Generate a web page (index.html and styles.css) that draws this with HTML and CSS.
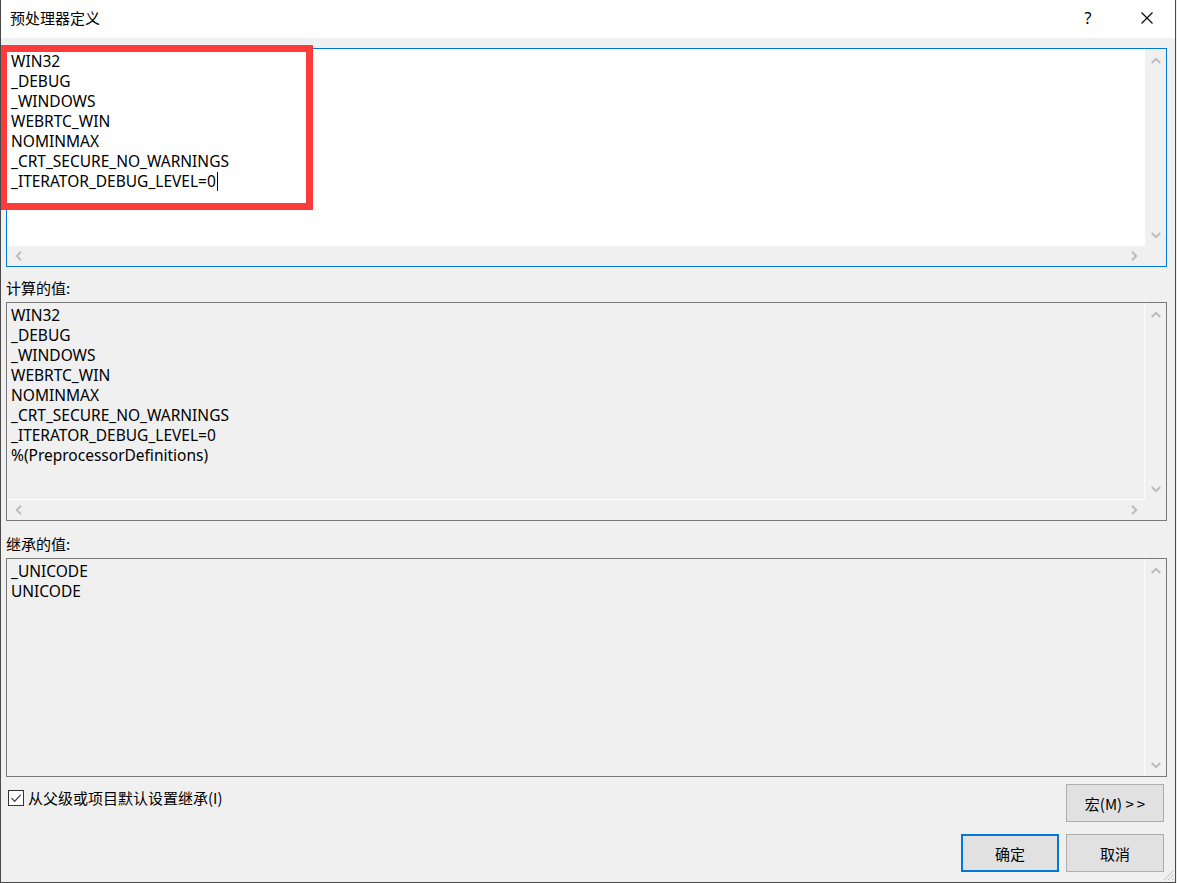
FILE: index.html
```html
<!DOCTYPE html>
<html lang="zh-CN">
<head>
<meta charset="utf-8">
<title>预处理器定义</title>
<link rel="stylesheet" href="styles.css">
</head>
<body>
<div class="window">
  <div class="titlebar">
    <span class="title">预处理器定义</span>
    <span class="help">?</span>
    <span class="close">
      <svg width="12" height="12" viewBox="0 0 12 12"><path d="M0.5 0.5 L11.5 11.5 M11.5 0.5 L0.5 11.5" stroke="#000" stroke-width="1.1" fill="none"/></svg>
    </span>
  </div>
  <div class="client">
    <div class="editbox focused has-h">
      <div class="content">
        <div class="line">WIN32</div>
        <div class="line">_DEBUG</div>
        <div class="line">_WINDOWS</div>
        <div class="line">WEBRTC_WIN</div>
        <div class="line">NOMINMAX</div>
        <div class="line">_CRT_SECURE_NO_WARNINGS</div>
        <div class="line">_ITERATOR_DEBUG_LEVEL=0<span class="caret"></span></div>
      </div>
      <div class="vscroll">
        <span class="sbtn"><svg width="10" height="7" viewBox="0 0 10 7"><polyline points="0.8,6 5,1.8 9.2,6" class="chev"/></svg></span>
        <span class="sbtn"><svg width="10" height="7" viewBox="0 0 10 7"><polyline points="0.8,1 5,5.2 9.2,1" class="chev"/></svg></span>
      </div>
      <div class="hscroll">
        <span class="hbtn"><svg width="7" height="10" viewBox="0 0 7 10"><polyline points="6,0.8 1.8,5 6,9.2" class="chev"/></svg></span>
        <span class="hbtn"><svg width="7" height="10" viewBox="0 0 7 10"><polyline points="1,0.8 5.2,5 1,9.2" class="chev"/></svg></span>
      </div>
      <div class="corner"></div>
    </div>

    <div class="label label-a">计算的值:</div>
    <div class="editbox disabled has-h">
      <div class="content">
        <div class="line">WIN32</div>
        <div class="line">_DEBUG</div>
        <div class="line">_WINDOWS</div>
        <div class="line">WEBRTC_WIN</div>
        <div class="line">NOMINMAX</div>
        <div class="line">_CRT_SECURE_NO_WARNINGS</div>
        <div class="line">_ITERATOR_DEBUG_LEVEL=0</div>
        <div class="line">%(PreprocessorDefinitions)</div>
      </div>
      <div class="vscroll">
        <span class="sbtn"><svg width="10" height="7" viewBox="0 0 10 7"><polyline points="0.8,6 5,1.8 9.2,6" class="chev"/></svg></span>
        <span class="sbtn"><svg width="10" height="7" viewBox="0 0 10 7"><polyline points="0.8,1 5,5.2 9.2,1" class="chev"/></svg></span>
      </div>
      <div class="hscroll">
        <span class="hbtn"><svg width="7" height="10" viewBox="0 0 7 10"><polyline points="6,0.8 1.8,5 6,9.2" class="chev"/></svg></span>
        <span class="hbtn"><svg width="7" height="10" viewBox="0 0 7 10"><polyline points="1,0.8 5.2,5 1,9.2" class="chev"/></svg></span>
      </div>
      <div class="corner"></div>
    </div>

    <div class="label label-b">继承的值:</div>
    <div class="editbox disabled">
      <div class="content">
        <div class="line">_UNICODE</div>
        <div class="line">UNICODE</div>
      </div>
      <div class="vscroll">
        <span class="sbtn"><svg width="10" height="7" viewBox="0 0 10 7"><polyline points="0.8,6 5,1.8 9.2,6" class="chev"/></svg></span>
        <span class="sbtn"><svg width="10" height="7" viewBox="0 0 10 7"><polyline points="0.8,1 5,5.2 9.2,1" class="chev"/></svg></span>
      </div>
    </div>

    <div class="row-a">
      <label class="check">
        <span class="checkbox"><svg width="14" height="14" viewBox="0 0 14 14"><polyline points="2.5,7.2 5.6,10.3 11.6,3.8" fill="none" stroke="#3a3a3a" stroke-width="1.2"/></svg></span>
        <span class="check-text">从父级或项目默认设置继承(I)</span>
      </label>
      <button class="btn">宏(M) <span class="gt">&gt;&gt;</span></button>
    </div>
    <div class="row-b">
      <button class="btn default">确定</button>
      <button class="btn">取消</button>
    </div>
  </div>
  <svg class="grip" width="12" height="12" viewBox="0 0 12 12">
    <path d="M11 2 L2 11 M11 6 L6 11 M11 10 L10 11" stroke="#b5b5b5" stroke-width="1.2" stroke-dasharray="1 1" fill="none"/>
  </svg>
  <div class="annotation"></div>
</div>
</body>
</html>
```

FILE: styles.css
```css
* { box-sizing: border-box; }

html, body {
  margin: 0;
  padding: 0;
  background: #f0f0f0;
}

body {
  font-family: "Noto Sans CJK SC", sans-serif;
  font-size: 15px;
  color: #000;
}

.window {
  position: relative;
  width: 1176px;
  height: 883px;
  background: #f0f0f0;
  border-left: 1px solid #4a4a4a;
  border-right: 1px solid #4a4a4a;
  border-bottom: 1px solid #4a4a4a;
  overflow: hidden;
}

.titlebar {
  height: 38px;
  background: #fff;
  display: flex;
  align-items: center;
  padding-left: 9px;
}

.title {
  font-size: 15px;
  line-height: 20px;
  flex: 1;
  position: relative;
  top: -1px;
}

.help {
  font-family: "Noto Sans", sans-serif;
  font-size: 16px;
  width: 20px;
  text-align: center;
  margin-right: 43px;
  position: relative;
  top: -1px;
}

.close {
  width: 12px;
  height: 12px;
  display: flex;
  margin-right: 22px;
  position: relative;
  top: -1px;
}

.client {
  padding: 10px 8px 0 5px;
}

.editbox {
  height: 219px;
  border: 1px solid #7a7a7a;
  display: grid;
  grid-template-columns: 1fr 21px;
  grid-template-rows: 1fr;
}

.editbox.has-h {
  grid-template-rows: 1fr 20px;
}

.editbox.focused {
  border-color: #0078d7;
}

.content {
  background: #fff;
  padding: 2px 0 0 4px;
  font-family: "Noto Sans", sans-serif;
  font-size: 15.5px;
  overflow: hidden;
}

.disabled .content {
  background: #f0f0f0;
  border-right: 1px solid #fbfbfb;
}

.disabled.has-h .content {
  border-bottom: 1px solid #fbfbfb;
}

.line {
  height: 20px;
  line-height: 20px;
  white-space: nowrap;
}

.caret {
  display: inline-block;
  width: 1px;
  height: 19px;
  background: #000;
  vertical-align: middle;
  margin-left: 1px;
  position: relative;
  top: -1px;
}

.vscroll {
  background: #f0f0f0;
  display: flex;
  flex-direction: column;
  justify-content: space-between;
}

.sbtn {
  height: 22px;
  display: flex;
  align-items: center;
  justify-content: center;
}

.hscroll {
  background: #f0f0f0;
  display: flex;
  justify-content: space-between;
}

.hbtn {
  width: 22px;
  display: flex;
  align-items: center;
  justify-content: center;
}

.corner {
  background: #f0f0f0;
}

.chev {
  fill: none;
  stroke: #bdbdbd;
  stroke-width: 2;
}

.label {
  line-height: 20px;
  height: 20px;
  margin-bottom: 4px;
}

.label-a { margin-top: 11px; }
.label-b { margin-top: 13px; }

.row-a {
  display: flex;
  justify-content: space-between;
  align-items: flex-start;
  margin-top: 7px;
  padding-right: 3px;
}

.check {
  display: flex;
  align-items: center;
  margin-top: 4px;
  margin-left: 2px;
}

.checkbox {
  width: 16px;
  height: 16px;
  border: 1px solid #333;
  background: #fff;
  display: flex;
  align-items: center;
  justify-content: center;
}

.check-text {
  margin-left: 4px;
  line-height: 20px;
}

.btn {
  width: 98px;
  height: 38px;
  background: #e1e1e1;
  border: 1px solid #adadad;
  font-family: "Noto Sans CJK SC", sans-serif;
  font-size: 15px;
  color: #000;
  padding: 0;
  margin: 0;
}

.btn .gt {
  letter-spacing: 3px;
  margin-right: -3px;
}

.btn.default {
  border: 2px solid #0078d7;
}

.row-b {
  display: flex;
  justify-content: flex-end;
  gap: 7px;
  margin-top: 12px;
  padding-right: 3px;
}

.grip {
  position: absolute;
  right: 1px;
  bottom: 1px;
}

.annotation {
  position: absolute;
  left: -1px;
  top: 45px;
  width: 313px;
  height: 165px;
  border: 7px solid #fd3b3b;
  pointer-events: none;
}
```
